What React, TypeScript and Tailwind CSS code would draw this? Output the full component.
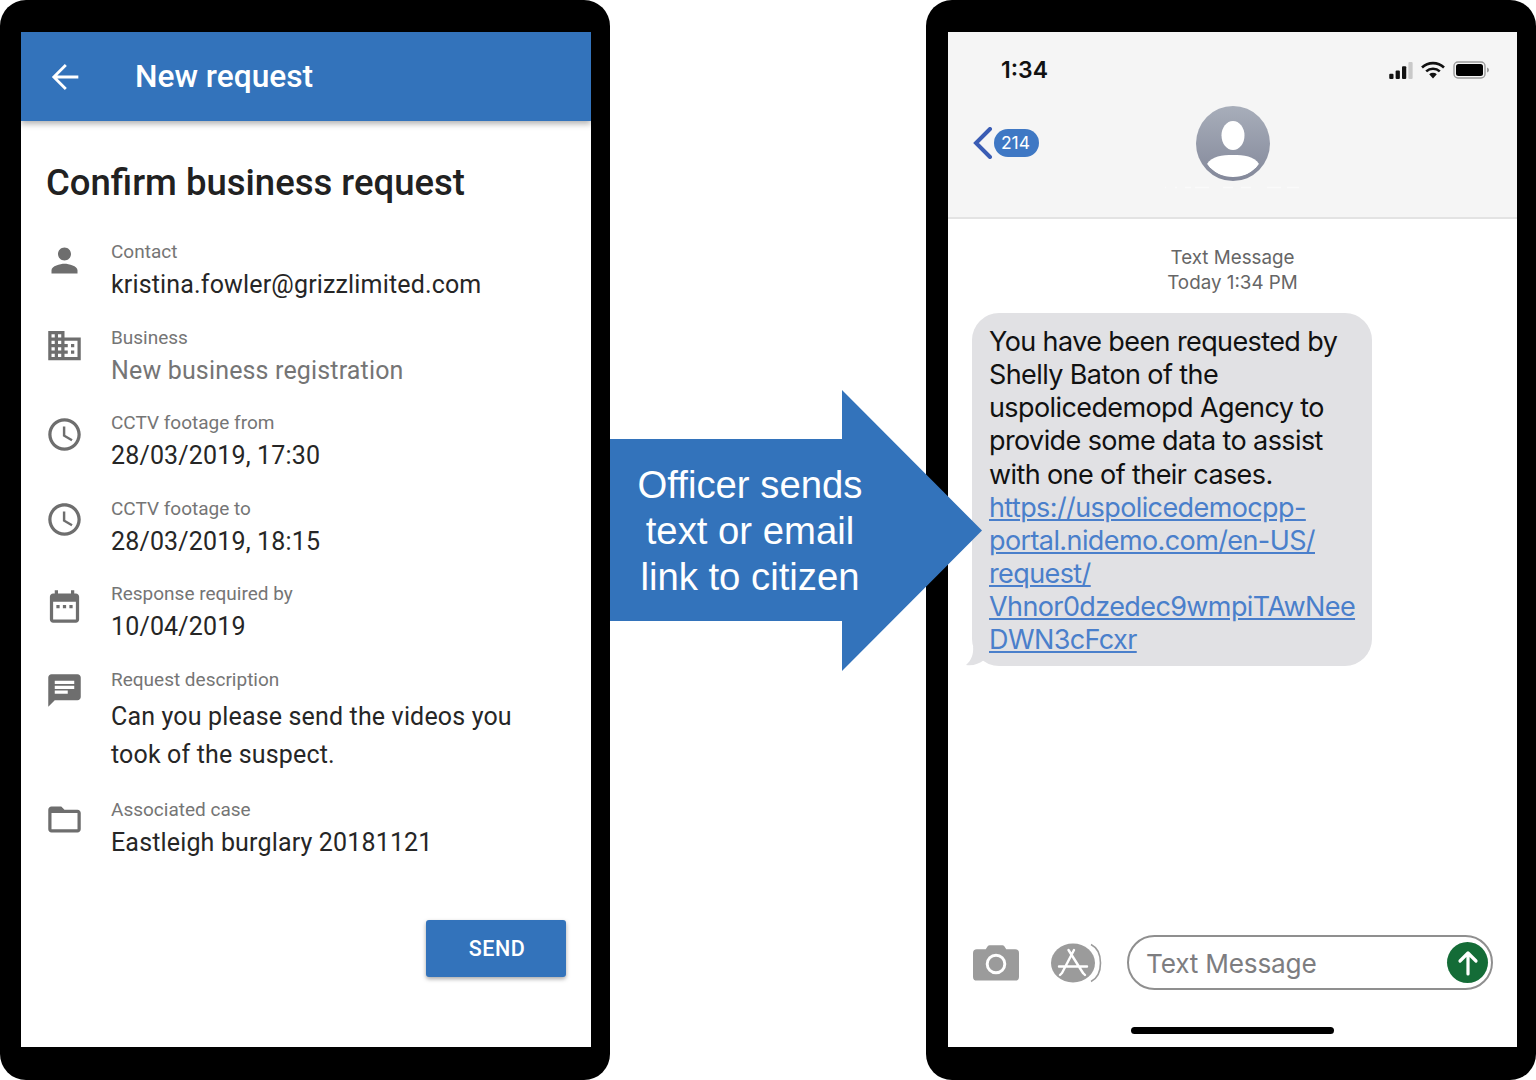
import type { ReactNode } from "react";

const PATHS = {
  person:
    "M12 12c2.21 0 4-1.79 4-4s-1.79-4-4-4-4 1.79-4 4 1.79 4 4 4zm0 2c-2.67 0-8 1.34-8 4v2h16v-2c0-2.66-5.33-4-8-4z",
  business:
    "M12 7V3H2v18h20V7H12zM6 19H4v-2h2v2zm0-4H4v-2h2v2zm0-4H4V9h2v2zm0-4H4V5h2v2zm4 12H8v-2h2v2zm0-4H8v-2h2v2zm0-4H8V9h2v2zm0-4H8V5h2v2zm10 12h-8v-2h2v-2h-2v-2h2v-2h-2V9h8v10zm-2-8h-2v2h2v-2zm0 4h-2v2h2v-2z",
  clock:
    "M11.99 2C6.47 2 2 6.48 2 12s4.47 10 9.99 10C17.52 22 22 17.52 22 12S17.52 2 11.99 2zM12 20c-4.42 0-8-3.58-8-8s3.58-8 8-8 8 3.58 8 8-3.58 8-8 8zm.5-13H11v6l5.25 3.15.75-1.23-4.5-2.67z",
  calendar:
    "M9 11H7v2h2v-2zm4 0h-2v2h2v-2zm4 0h-2v2h2v-2zm2-7h-1V2h-2v2H8V2H6v2H5c-1.11 0-1.99.9-1.99 2L3 20c0 1.1.89 2 2 2h14c1.1 0 2-.9 2-2V6c0-1.1-.9-2-2-2zm0 16H5V9h14v11z",
  chat: "M20 2H4c-1.1 0-1.99.9-1.99 2L2 22l4-4h14c1.1 0 2-.9 2-2V4c0-1.1-.9-2-2-2zM6 9h12v2H6V9zm8 5H6v-2h8v2zm4-6H6V6h12v2z",
  folder:
    "M20 6h-8l-2-2H4c-1.1 0-1.99.9-1.99 2L2 18c0 1.1.9 2 2 2h16c1.1 0 2-.9 2-2V8c0-1.1-.9-2-2-2zm0 12H4V8h16v10z",
};

function MaterialIcon({ d, className }: { d: string; className?: string }) {
  return (
    <svg viewBox="0 0 24 24" className={className} fill="currentColor">
      <path d={d} />
    </svg>
  );
}

function Row({
  icon,
  iconClass,
  label,
  children,
}: {
  icon: string;
  iconClass: string;
  label: string;
  children: ReactNode;
}) {
  return (
    <div className="flex mb-[20.5px]">
      <MaterialIcon d={icon} className={`w-[39px] h-[39px] shrink-0 ml-6 text-[#6e6e6e] ${iconClass}`} />
      <div className="ml-[27px]">
        <div className="h-[27px] text-[19px] leading-[25.500px] text-[#757575]">{label}</div>
        {children}
      </div>
    </div>
  );
}

function Value({ children, muted }: { children: ReactNode; muted?: boolean }) {
  return (
    <div className={`text-[25px] leading-[38px] tracking-[0.16px] ${muted ? "text-[#757575]" : "text-[#262626]"}`}>
      {children}
    </div>
  );
}

function RequestPhone() {
  return (
    <div className="w-[610px] h-full bg-black rounded-[26px] pt-8 pl-[21px] pr-[19px] pb-[33px]">
      <div className="h-full bg-white flex flex-col font-['Roboto',sans-serif]">
        <header className="h-[89px] shrink-0 bg-[#3373bb] flex items-center shadow-[0_3px_6px_rgba(0,0,0,0.3)]">
          <svg viewBox="0 0 24 24" className="w-10 h-10 ml-6 text-white" fill="none" stroke="currentColor" strokeWidth="1.7">
            <path d="M20 12H5.500M12.500 4.800 5.300 12l7.200 7.200" />
          </svg>
          <h1 className="ml-[50px] text-[31.7px] font-medium text-white">New request</h1>
        </header>

        <h2 className="mt-10 mb-[34px] ml-[25px] text-[36.5px] leading-[44px] font-medium text-[#212121]">
          Confirm business request
        </h2>

        <Row icon={PATHS.person} iconClass="mt-[1.500px]" label="Contact">
          <Value>kristina.fowler@grizzlimited.com</Value>
        </Row>
        <Row icon={PATHS.business} iconClass="mt-[1.500px]" label="Business">
          <Value muted>New business registration</Value>
        </Row>
        <Row icon={PATHS.clock} iconClass="mt-[4.500px]" label="CCTV footage from">
          <Value>28/03/2019, 17:30</Value>
        </Row>
        <Row icon={PATHS.clock} iconClass="mt-[4.500px]" label="CCTV footage to">
          <Value>28/03/2019, 18:15</Value>
        </Row>
        <Row icon={PATHS.calendar} iconClass="mt-[5.500px]" label="Response required by">
          <Value>10/04/2019</Value>
        </Row>
        <Row icon={PATHS.chat} iconClass="mt-[4.500px]" label="Request description">
          <div className="mt-[4px] mb-[3px]">
            <Value>
              Can you please send the videos you
              <br />
              took of the suspect.
            </Value>
          </div>
        </Row>
        <Row icon={PATHS.folder} iconClass="mt-[2.500px]" label="Associated case">
          <Value>Eastleigh burglary 20181121</Value>
        </Row>

        <div className="flex justify-end pr-[25px] mt-[37px]">
          <button className="w-[140px] h-[57px] pt-0.5 pl-0.5 rounded-[3px] bg-[#3373bb] text-white text-[21.5px] font-medium tracking-[0.5px] shadow-[0_2px_4px_rgba(0,0,0,0.35)]">
            SEND
          </button>
        </div>
      </div>
    </div>
  );
}

function StatusIcons() {
  return (
    <div className="flex items-center gap-[6px]">
      <svg width="26" height="17" viewBox="0 0 24 16">
        <rect x="0" y="11" width="4" height="5" rx="1" fill="#111" />
        <rect x="6" y="8" width="4" height="8" rx="1" fill="#111" />
        <rect x="12" y="4" width="4" height="12" rx="1" fill="#111" />
        <rect x="18" y="0" width="4" height="16" rx="1" fill="#c9c9c9" />
      </svg>
      <svg width="24" height="18" viewBox="0 0 24 18">
        <path d="M1 6.5a16 16 0 0 1 22 0" fill="none" stroke="#111" strokeWidth="2.6" />
        <path d="M5.2 10.4a10 10 0 0 1 13.6 0" fill="none" stroke="#111" strokeWidth="2.6" />
        <path d="M8.2 13.2 12 17.4l3.8-4.2a5.6 5.6 0 0 0-7.6 0z" fill="#111" />
      </svg>
      <svg width="37" height="18" viewBox="0 0 37 18" className="ml-[2px]">
        <rect x="1" y="1" width="31" height="16" rx="4" fill="none" stroke="#9a9a9a" strokeWidth="1.4" />
        <rect x="3" y="3" width="27" height="12" rx="2.5" fill="#000" />
        <path d="M34 6.5c1.4.4 2 1.4 2 2.5s-.6 2.1-2 2.5z" fill="#9a9a9a" />
      </svg>
    </div>
  );
}

function MessagesPhone() {
  return (
    <div className="w-[610px] h-full bg-black rounded-[26px] pt-8 pl-[22px] pr-[19px] pb-[33px]">
      <div className="h-full bg-white flex flex-col font-['Inter',sans-serif]">
        <div className="h-[187px] shrink-0 bg-[#f5f5f5] border-b-2 border-[#e3e3e3] flex flex-col">
          <div className="flex items-center justify-between pl-[53px] pr-[27px] pt-[22px]">
            <span className="text-[23px] leading-[32px] font-semibold text-[#111]">1:34</span>
            <StatusIcons />
          </div>
          <div className="relative flex flex-col items-center mt-5">
            <div className="absolute left-[25px] top-[21px] flex items-center">
              <svg width="20" height="32" viewBox="0 0 20 32">
                <path d="M17 2 3 16l14 14" fill="none" stroke="#3a5cb4" strokeWidth="4" strokeLinecap="round" />
              </svg>
              <span className="ml-[1px] w-[45px] h-[28px] rounded-full bg-[#3f78c4] text-white text-[17.5px] pr-0.5 flex items-center justify-center">
                214
              </span>
            </div>
            <svg width="74" height="75" viewBox="0 0 74 75">
              <defs>
                <linearGradient id="avatarFill" x1="0" y1="0" x2="0" y2="1">
                  <stop offset="0" stopColor="#a8aeba" />
                  <stop offset="1" stopColor="#83889a" />
                </linearGradient>
                <clipPath id="avatarClip">
                  <ellipse cx="37" cy="37.5" rx="33" ry="34" />
                </clipPath>
              </defs>
              <ellipse cx="37" cy="37.500" rx="37" ry="37.500" fill="url(#avatarFill)" />
              <ellipse cx="37" cy="29.500" rx="11.500" ry="14.500" fill="#fff" />
              <path d="M11 58c5-8 15-9 26-9s21 1 26 9c-6 9-16 13-26 13s-20-4-26-13z" fill="#fff" clipPath="url(#avatarClip)" />
            </svg>
            {/* redacted phone number under the avatar, only faint specks remain */}
            <svg width="140" height="3" viewBox="0 0 140 3" className="mt-[5px] opacity-50">
              <path d="M2 1.500h1M12 1.500h2M22 1.500h6M32 1.500h14M60 1.500h10M78 1.500h10M104 1.500h14M124 1.500h12" stroke="#fff" strokeWidth="1.500" />
            </svg>
          </div>
        </div>

        <div className="flex-1 flex flex-col pt-[26px]">
          <div className="text-center text-[18.8px] leading-[25px] text-[#666]">
            Text Message
            <br />
            Today 1:34 PM
          </div>

          <div className="relative ml-6 mt-[18px] w-[400px] rounded-[27px] bg-[#e1e1e4] pl-[17px] pr-2 pt-3 pb-[9px] text-[27px] leading-[33.15px] text-[#111]">
            <svg width="22" height="20" viewBox="0 0 22 20" className="absolute left-[-8px] bottom-0">
              <path d="M9 0c1 8-2 15-7 19 7 1 13-1 18-5z" fill="#e1e1e4" />
            </svg>
            <div className="relative tracking-[-0.6px]">
              You have been requested by
              <br />
              Shelly Baton of the
              <br />
              uspolicedemopd Agency to
              <br />
              provide some data to assist
              <br />
              with one of their cases.
              <br />
              <span className="text-[#4a7fcb] underline">
                https://uspolicedemocpp-
                <br />
                portal.nidemo.com/en-US/
                <br />
                request/
                <br />
                Vhnor0dzedec9wmpiTAwNee
                <br />
                DWN3cFcxr
              </span>
            </div>
          </div>

          <div className="mt-auto flex items-center pl-[25px] pr-6">
            <svg width="46" height="37" viewBox="0 0 47 37">
              <path
                d="M4 5h9l2-3a3 3 0 0 1 2-1h13a3 3 0 0 1 2 1l2 3h9a4 4 0 0 1 4 4v24a4 4 0 0 1-4 4H4a4 4 0 0 1-4-4V9a4 4 0 0 1 4-4z"
                fill="#9b9b9b"
              />
              <circle cx="23.5" cy="20" r="9" fill="none" stroke="#fff" strokeWidth="3" />
            </svg>
            <svg width="52" height="40" viewBox="0 0 52 40" className="ml-8">
              <path d="M40 1.500c6 3 9.500 10 9.500 18.500s-3.500 15.500-9.500 18.500" fill="none" stroke="#9b9b9b" strokeWidth="1.600" />
              <ellipse cx="22" cy="20" rx="22" ry="19.500" fill="#9b9b9b" />
              <path
                d="M17.500 7 32 30M23 7 11 30M8 23.500h28M32 30l2 2M11 30l-2 2"
                fill="none"
                stroke="#fff"
                strokeWidth="2.400"
                strokeLinecap="round"
              />
            </svg>
            <div className="ml-[24px] flex-1 h-[55px] rounded-full border-2 border-[#8f8f8f] flex items-center justify-between pl-[17px] pr-[3px]">
              <span className="pt-0.5 text-[26.2px] text-[#7d7d80] tracking-[-0.2px]">Text Message</span>
              <span className="w-[41px] h-[41px] rounded-full bg-[#146c37] flex items-center justify-center">
                <svg width="22" height="26" viewBox="0 0 22 26">
                  <path d="M11 24V3M3 11l8-8 8 8" fill="none" stroke="#fff" strokeWidth="3.2" strokeLinecap="round" strokeLinejoin="round" />
                </svg>
              </span>
            </div>
          </div>

          <div className="mt-[37px] mb-[13px] self-center w-[203px] h-[7px] rounded-full bg-black" />
        </div>
      </div>
    </div>
  );
}

export default function App() {
  return (
    <div className="relative w-[1536px] h-[1080px] bg-white overflow-hidden flex justify-between">
      <RequestPhone />
      <MessagesPhone />

      {/* Arrow sits over the gap and overlaps the right phone */}
      <svg width="373" height="281" viewBox="0 0 373 281" className="absolute left-[610px] top-[390px]">
        <path d="M0 49h232V0l140 140.500L232 281v-50H0z" fill="#3373bb" />
      </svg>
      <div className="absolute left-[610px] top-[462px] w-[280px] text-center text-white text-[38.3px] leading-[46px] font-['Liberation_Sans',sans-serif]">
        Officer sends
        <br />
        text or email
        <br />
        link to citizen
      </div>
    </div>
  );
}
